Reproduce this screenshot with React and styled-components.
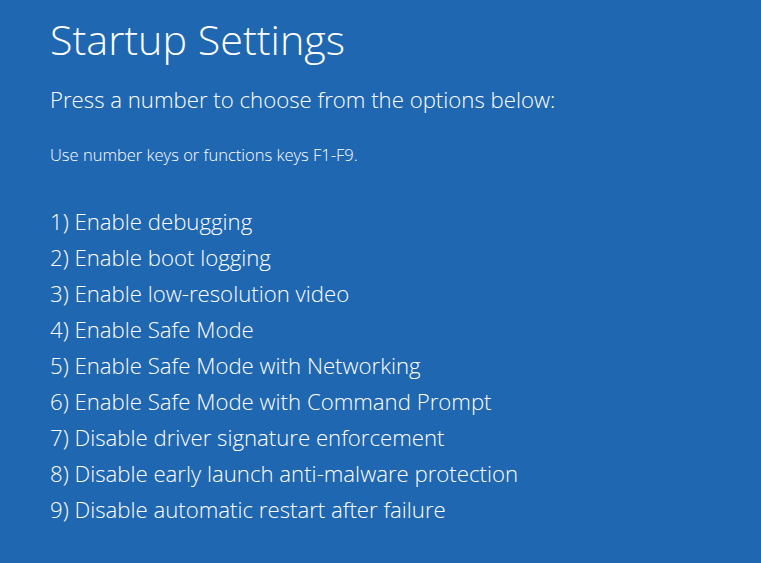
import styled, { createGlobalStyle } from "styled-components";

const GlobalStyle = createGlobalStyle`
  html, body {
    margin: 0;
    height: 100%;
    background: #2067b2;
  }
  #root {
    min-height: 100%;
  }
`;

const Screen = styled.main`
  box-sizing: border-box;
  min-height: 563px;
  padding: 11px 0 0 50px;
  background: #2067b2;
  color: #ffffff;
  font-family: "Open Sans", "Noto Sans", sans-serif;
  font-weight: 300;
`;

const Title = styled.h1`
  margin: 0;
  font-size: 41.3px;
  font-weight: 300;
  line-height: 56px;
`;

const Prompt = styled.p`
  margin: 19px 0 0;
  font-size: 22.2px;
  line-height: 28px;
`;

const Hint = styled.p`
  margin: 30px 0 0;
  font-size: 16.5px;
  line-height: 22px;
`;

const Options = styled.ol`
  list-style: none;
  margin: 38px 0 0;
  padding: 0;
  display: flex;
  flex-direction: column;
`;

const Option = styled.li`
  font-size: 22.2px;
  line-height: 36px;
`;

const options = [
  "Enable debugging",
  "Enable boot logging",
  "Enable low-resolution video",
  "Enable Safe Mode",
  "Enable Safe Mode with Networking",
  "Enable Safe Mode with Command Prompt",
  "Disable driver signature enforcement",
  "Disable early launch anti-malware protection",
  "Disable automatic restart after failure",
];

export default function App() {
  return (
    <>
      <GlobalStyle />
      <Screen>
        <Title>Startup Settings</Title>
        <Prompt>Press a number to choose from the options below:</Prompt>
        <Hint>Use number keys or functions keys F1-F9.</Hint>
        <Options>
          {options.map((text, i) => (
            <Option key={text}>
              {i + 1}) {text}
            </Option>
          ))}
        </Options>
      </Screen>
    </>
  );
}
